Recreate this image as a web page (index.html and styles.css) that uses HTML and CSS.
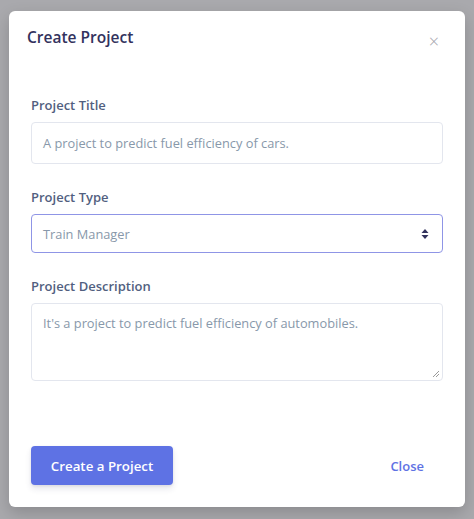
FILE: index.html
```html
<!DOCTYPE html>
<html>
<head>
<meta charset="utf-8">
<link rel="stylesheet" href="styles.css">
</head>
<body>
<div class="backdrop">
  <div class="modal">
    <div class="modal-header">
      <h5 class="modal-title">Create Project</h5>
      <span class="close-x">&times;</span>
    </div>
    <div class="modal-body">
      <div class="form-group">
        <label class="form-label">Project Title</label>
        <div class="form-control placeholder">A project to predict fuel efficiency of cars.</div>
      </div>
      <div class="form-group">
        <label class="form-label">Project Type</label>
        <div class="form-control select">
          <span>Train Manager</span>
          <svg class="caret" width="8" height="12" viewBox="0 0 8 12"><path d="M4 1 L7.5 5 H0.5 Z M4 11 L7.5 7 H0.5 Z" fill="#32325d"/></svg>
        </div>
      </div>
      <div class="form-group">
        <label class="form-label">Project Description</label>
        <div class="form-control textarea placeholder">It's a project to predict fuel efficiency of automobiles.
          <svg class="grip" width="8" height="8" viewBox="0 0 8 8"><path d="M7 1 L1 7 M7 4 L4 7" stroke="#9a9a9a" stroke-width="1"/></svg>
        </div>
      </div>
    </div>
    <div class="modal-footer">
      <button class="btn-primary">Create a Project</button>
      <button class="btn-link">Close</button>
    </div>
  </div>
</div>
</body>
</html>
```

FILE: styles.css
```css
* { box-sizing: border-box; }
html, body { margin: 0; padding: 0; }
body {
  background: #a9a9ad;
  font-family: "Open Sans", "Noto Sans", sans-serif;
  width: 474px;
  height: 519px;
  overflow: hidden;
}
.backdrop {
  padding: 11px 9px 0 9px;
}
.modal {
  width: 456px;
  height: 496px;
  background: #fff;
  border-radius: 6px;
  box-shadow: 0 6px 16px rgba(0,0,0,0.18);
  display: flex;
  flex-direction: column;
}
.modal-header {
  display: flex;
  justify-content: space-between;
  align-items: flex-start;
  padding: 14px 26px 0 18px;
  height: 84px;
}
.modal-title {
  margin: 0;
  font-size: 15.5px;
  font-weight: 600;
  line-height: 24px;
  color: #32325d;
}
.close-x {
  font-size: 18px;
  font-weight: 300;
  color: #a3a3aa;
  line-height: 20px;
  margin-top: 6px;
}
.modal-body {
  padding: 0 22px;
  flex: 1;
}
.form-group {
  margin-bottom: 23px;
}
.form-label {
  display: block;
  font-size: 13px;
  font-weight: 600;
  color: #525f7f;
  line-height: 21px;
  margin-bottom: 6px;
}
.form-control {
  height: 42px;
  border: 1px solid #e3e6ee;
  border-radius: 4px;
  padding: 0 11px;
  font-size: 12.8px;
  color: #8898aa;
  display: flex;
  align-items: center;
}
.select {
  height: 39px;
  border-color: #8f95e6;
  justify-content: space-between;
}
.caret { margin-right: 2px; }
.textarea {
  height: 78px;
  align-items: flex-start;
  padding-top: 10px;
  position: relative;
  white-space: nowrap;
}
.grip {
  position: absolute;
  right: 2px;
  bottom: 2px;
}
.modal-footer {
  display: flex;
  justify-content: space-between;
  align-items: center;
  padding: 0 41px 22px 22px;
}
.btn-primary {
  background: #5e72e4;
  color: #fff;
  border: none;
  border-radius: 4px;
  height: 39px;
  width: 142px;
  font-family: inherit;
  font-size: 13.3px;
  font-weight: 600;
  box-shadow: 0 4px 6px rgba(50,50,93,0.11), 0 1px 3px rgba(0,0,0,0.08);
}
.btn-link {
  background: none;
  border: none;
  color: #5e72e4;
  font-family: inherit;
  font-size: 13px;
  font-weight: 600;
  padding: 0;
}
```
